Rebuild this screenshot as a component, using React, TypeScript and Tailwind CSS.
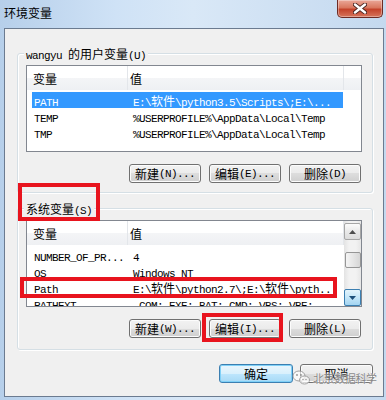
import React from "react";

const cjk = /[\u2E80-\u9FFF\uFF00-\uFFEF\u3000-\u303F]/;

function T({ s }: { s: string }) {
  const parts: { t: string; c: boolean }[] = [];
  for (const ch of s) {
    const c = cjk.test(ch);
    const last = parts[parts.length - 1];
    if (last && last.c === c) last.t += ch;
    else parts.push({ t: ch, c });
  }
  return (
    <>
      {parts.map((p, i) =>
        p.c ? (
          <span key={i} className="font-['Noto_Sans_CJK_SC',sans-serif] text-[12px]">
            {p.t}
          </span>
        ) : (
          <span key={i} className="font-['Liberation_Mono',monospace] text-[11px] tracking-[-0.6px]">
            {p.t}
          </span>
        )
      )}
    </>
  );
}

function Btn({ label, w = "w-[72px]", def = false }: { label: string; w?: string; def?: boolean }) {
  return (
    <div
      className={`${w} h-[19px] rounded-[3px] border flex items-center justify-center leading-[16px] whitespace-nowrap ${
        def
          ? "border-[#3c7fb1] bg-[linear-gradient(180deg,#eaf6fd_0%,#d9f0fc_50%,#bee6fd_50%,#a7d9f5_100%)] shadow-[inset_0_0_0_1px_#7fd0f7]"
          : "border-[#707070] bg-[linear-gradient(180deg,#f2f2f2_0%,#ebebeb_50%,#dddddd_50%,#cfcfcf_100%)] shadow-[inset_0_0_0_1px_#fcfcfc]"
      }`}
    >
      <T s={label} />
    </div>
  );
}

type Row = { k: string; v: string; sel?: boolean };

function Header({ filler }: { filler: boolean }) {
  return (
    <div className="h-[24px] flex shrink-0 bg-[linear-gradient(180deg,#ffffff_0%,#ffffff_50%,#f4f5f7_50%,#eef0f3_100%)]">
      <div className="w-[101px] border-r border-[#e3e6ea] pl-[6px] pt-[4px] leading-[16px]">
        <T s="变量" />
      </div>
      <div className="w-[216px] border-r border-[#e3e6ea] pl-[2px] pt-[4px] leading-[16px]">
        <T s="值" />
      </div>
      {filler && <div className="flex-1" />}
    </div>
  );
}

function Rows({ rows }: { rows: Row[] }) {
  return (
    <div className="mt-[2px] pl-[5px] flex flex-col">
      {rows.map((r, i) => (
        <div
          key={i}
          className={`w-[311px] h-[16px] flex leading-[16px] whitespace-nowrap ${
            r.sel ? "bg-[#3399ff] text-white" : "text-black"
          }`}
        >
          <div className="w-[96px] pl-[2px] overflow-hidden">
            <T s={r.k} />
          </div>
          <div className="flex-1 pl-[5px] overflow-hidden">
            <T s={r.v} />
          </div>
        </div>
      ))}
    </div>
  );
}

function ScrollBar() {
  return (
    <div className="w-[17px] h-full flex flex-col items-center bg-[linear-gradient(90deg,#e3e3e3_0%,#f2f2f2_30%,#f2f2f2_70%,#e6e6e6_100%)]">
      <div className="mt-[2px] w-[17px] h-[17px] rounded-[2px] border border-[#a6a6a6] bg-[linear-gradient(180deg,#fbfbfb_0%,#e9e9e9_50%,#dcdcdc_100%)] flex items-center justify-center">
        <svg width="7" height="4" viewBox="0 0 7 4">
          <path d="M0 4 L3.5 0 L7 4 Z" fill="#4d4d4d" />
        </svg>
      </div>
      <div className="mt-[12px] w-[16px] h-[16px] rounded-[2px] border border-[#969696] bg-[linear-gradient(90deg,#f4f4f4_0%,#e6e6e6_50%,#d6d6d6_100%)]" />
      <div className="flex-1" />
      <div className="w-[17px] h-[17px] rounded-[2px] border border-[#3c7fb1] bg-[linear-gradient(180deg,#e3f4fc_0%,#c4e6f8_50%,#a3d4f1_100%)] flex items-center justify-center">
        <svg width="7" height="4" viewBox="0 0 7 4">
          <path d="M0 0 L7 0 L3.5 4 Z" fill="#1d4f7a" />
        </svg>
      </div>
    </div>
  );
}

function Group({
  legend,
  children,
  className = "",
}: {
  legend: string;
  children: React.ReactNode;
  className?: string;
}) {
  return (
    <div
      className={`relative ml-[12px] w-[356px] rounded-[3px] border border-[#d5dfe5] shadow-[inset_1px_1px_0_#ffffff,1px_1px_0_#ffffff] pl-[8px] pr-[9px] pt-[11px] ${className}`}
    >
      <div className="absolute left-[6px] top-[-9px] px-[2px] bg-[#f0f0f0] leading-[16px] whitespace-nowrap">
        <T s={legend} />
      </div>
      {children}
    </div>
  );
}

export default function App() {
  const userRows: Row[] = [
    { k: "PATH", v: "E:\\软件\\python3.5\\Scripts\\;E:\\...", sel: true },
    { k: "TEMP", v: "%USERPROFILE%\\AppData\\Local\\Temp" },
    { k: "TMP", v: "%USERPROFILE%\\AppData\\Local\\Temp" },
  ];
  const sysRows: Row[] = [
    { k: "NUMBER_OF_PR...", v: "4" },
    { k: "OS", v: "Windows NT" },
    { k: "Path", v: "E:\\软件\\python2.7\\;E:\\软件\\pyth..." },
    { k: "PATHEXT", v: ".COM;.EXE;.BAT;.CMD;.VBS;.VBE;..." },
  ];

  return (
    <div className="w-[386px] h-[400px] relative overflow-hidden bg-[linear-gradient(90deg,#b6cfea_0%,#cfe2f6_30%,#d9e8f7_50%,#c4d9ef_100%)] text-black select-none">
      {/* title bar */}
      <div className="h-[28px] flex items-start justify-between">
        <div className="pl-[4px] pt-[5px] text-[12px] leading-[16px] font-['Noto_Sans_CJK_SC',sans-serif] text-black">
          环境变量
        </div>
        <div className="mr-[3px] w-[46px] h-[18px] rounded-b-[5px] border border-t-0 border-[#6d2b24] bg-[linear-gradient(180deg,#eaa899_0%,#d9775f_45%,#c4432b_55%,#d6755c_100%)] shadow-[inset_0_0_0_1px_rgba(255,255,255,0.35)] flex items-center justify-center">
          <svg width="14" height="11" viewBox="0 0 14 11">
            <path d="M2 1.5 L12 9.5 M12 1.5 L2 9.5" stroke="#4a2420" strokeWidth="4.2" strokeLinecap="round" />
            <path d="M2 1.5 L12 9.5 M12 1.5 L2 9.5" stroke="#ffffff" strokeWidth="2.4" strokeLinecap="round" />
          </svg>
        </div>
      </div>

      {/* client */}
      <div className="ml-[4px] w-[380px] h-[369px] border border-[#6b7b90] bg-[#f0f0f0] flex flex-col">
        <Group legend="wangyu 的用户变量(U)" className="mt-[24px] pb-[9px]">
          <div className="w-[336px] h-[87px] border border-[#828790] bg-white flex flex-col overflow-hidden">
            <Header filler />
            <Rows rows={userRows} />
          </div>
          <div className="mt-[12px] mr-[2px] flex justify-end gap-[8px]">
            <Btn label="新建(N)..." />
            <Btn label="编辑(E)..." />
            <Btn label="删除(D)" />
          </div>
        </Group>

        <Group legend="系统变量(S)" className="mt-[15px] pb-[11px]">
          <div className="w-[336px] h-[87px] border border-[#828790] bg-white flex overflow-hidden">
            <div className="flex-1 flex flex-col overflow-hidden">
              <Header filler={false} />
              <Rows rows={sysRows} />
            </div>
            <ScrollBar />
          </div>
          <div className="mt-[12px] mr-[2px] flex justify-end gap-[8px]">
            <Btn label="新建(W)..." />
            <Btn label="编辑(I)..." />
            <Btn label="删除(L)" />
          </div>
        </Group>

        <div className="mt-[14px] mr-[10px] flex justify-end gap-[7px]">
          <Btn label="确定" w="w-[74px]" def />
          <Btn label="取消" w="w-[73px]" />
        </div>
      </div>

      {/* red annotation boxes */}
      <div className="absolute left-[18px] top-[183px] w-[82px] h-[38px] border-[4px] border-[#e8141e]" />
      <div className="absolute left-[20px] top-[277px] w-[317px] h-[21px] border-[4px] border-[#e8141e]" />
      <div className="absolute left-[202px] top-[313px] w-[81px] h-[29px] border-[4px] border-[#e8141e]" />

      {/* watermark */}
      <div className="absolute left-[292px] top-[370px] flex items-center gap-[2px] opacity-90">
        <svg width="19" height="16" viewBox="0 0 19 16">
          <ellipse cx="7" cy="6" rx="6" ry="5" fill="rgba(255,255,255,0.7)" stroke="#9a9a9a" strokeWidth="1" />
          <ellipse cx="12.5" cy="10" rx="5" ry="4" fill="rgba(255,255,255,0.8)" stroke="#9a9a9a" strokeWidth="1" />
          <circle cx="5" cy="5" r="0.9" fill="#8a8a8a" />
          <circle cx="9" cy="5" r="0.9" fill="#8a8a8a" />
          <circle cx="11" cy="9.5" r="0.7" fill="#8a8a8a" />
          <circle cx="14" cy="9.5" r="0.7" fill="#8a8a8a" />
        </svg>
        <div className="text-[11px] leading-[14px] tracking-[-0.4px] font-['Noto_Sans_CJK_SC',sans-serif] text-[#7d7d7d] [text-shadow:0_0_2px_#ffffff,0_0_1px_#ffffff]">
          北京数据科学
        </div>
      </div>
    </div>
  );
}
